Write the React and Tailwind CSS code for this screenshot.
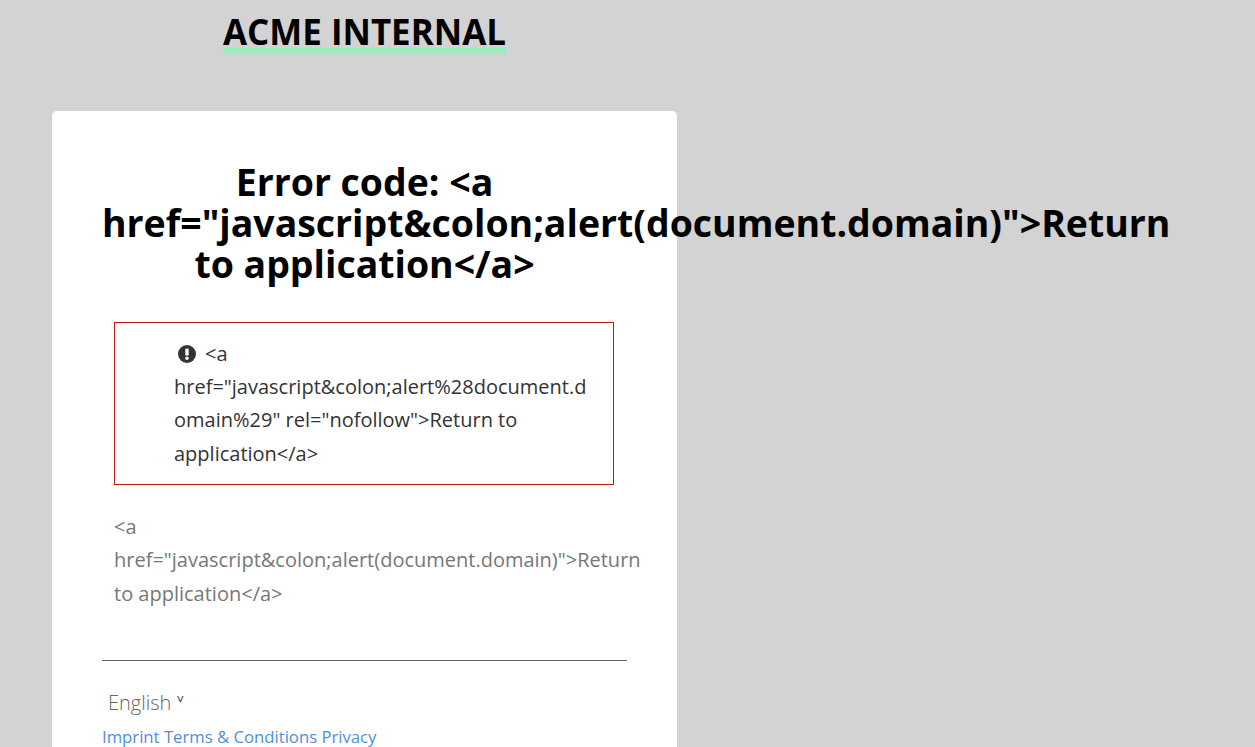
export default function App() {
  return (
    <div className="h-[747px] overflow-hidden bg-[#d3d3d3] font-['Open_Sans',sans-serif] text-[#333333]">
      <div className="w-[729px] px-[52px]">
        <div className="h-[111px] pt-[15px] text-center">
          <span className="inline-block text-[34.95px] font-bold leading-[33px] text-black border-b-[5px] border-[#98f0b8]">ACME INTERNAL</span>
        </div>
        <div className="w-[625px] h-[700px] bg-white rounded-[5px] px-[50px] pt-[50px]">
          <h1 className="text-[37.45px] font-bold leading-[41px] text-black text-center w-[525px]">
            Error code: &lt;a href="javascript&amp;colon;alert(document.domain)"&gt;Return to application&lt;/a&gt;
          </h1>
          <div className="mt-[38px] ml-[12px] w-[500px] h-[163px] border border-[#b71c0c] pl-[59px] pr-[26px] pt-[13.7px] text-[20px] leading-[33.3px] break-words">
            <span className="inline-block w-[31px] pl-[4px] align-[-2px]">
              <svg width="18" height="18" viewBox="0 0 18 18"><circle cx="9" cy="9" r="9" fill="#333333" /><rect x="7.3" y="3.4" width="3.4" height="7.2" rx="1.2" fill="#fff" /><circle cx="9" cy="13.2" r="1.8" fill="#fff" /></svg>
            </span>
            &lt;a href="javascript&amp;colon;alert%28document.domain%29" rel="nofollow"&gt;Return to application&lt;/a&gt;
          </div>
          <p className="mt-[24.7px] mb-[49.5px] ml-[12px] w-[530px] text-[20px] leading-[33.5px] text-[#777777]">
            &lt;a href="javascript&amp;colon;alert(document.domain)"&gt;Return to application&lt;/a&gt;
          </p>
          <hr className="border-t border-[#666666]" />
          <div className="mt-[25px] pl-[6px] text-[20px] font-light leading-[33px] text-[#666666]">English <span className="font-normal text-[13px] leading-none align-[6px] text-[#444444]">˅</span></div>
          <div className="mt-[6px] text-[16.7px] leading-[24px] text-[#4f8fdb]">
            <a>Imprint</a> <a>Terms &amp; Conditions</a> <a>Privacy</a>
          </div>
        </div>
      </div>
    </div>
  );
}
